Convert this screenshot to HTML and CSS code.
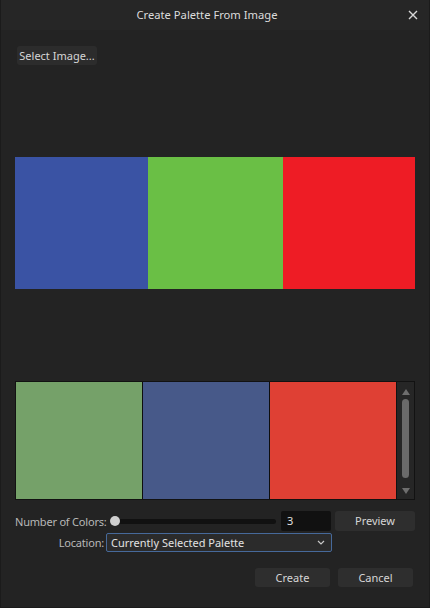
FILE: index.html
```html
<!DOCTYPE html>
<html>
<head>
<meta charset="utf-8">
<link rel="stylesheet" href="styles.css">
</head>
<body>
<div class="window">
  <div class="titlebar">
    <span class="title">Create Palette From Image</span>
    <svg class="close" width="10" height="10" viewBox="0 0 10 10"><path d="M1 1L9 9M9 1L1 9" stroke="#d8d8d8" stroke-width="1.4"/></svg>
  </div>
  <div class="content">
    <div class="select-row"><button class="btn select-btn">Select Image...</button></div>
    <div class="image">
      <div class="img-blue"></div>
      <div class="img-green"></div>
      <div class="img-red"></div>
    </div>
    <div class="palette">
      <div class="swatches">
        <div class="sw sw-green"></div>
        <div class="sw sw-blue"></div>
        <div class="sw sw-red"></div>
      </div>
      <div class="scrollbar">
        <svg class="arrow" width="8" height="6" viewBox="0 0 8 6"><path d="M4 0L8 6H0Z" fill="#6e6e6e"/></svg>
        <div class="thumb"></div>
        <svg class="arrow" width="8" height="6" viewBox="0 0 8 6"><path d="M0 0H8L4 6Z" fill="#6e6e6e"/></svg>
      </div>
    </div>
    <div class="row row1">
      <span class="label">Number of Colors:</span>
      <div class="slider"><div class="track"></div><div class="knob"></div></div>
      <div class="numbox">3</div>
      <button class="btn preview-btn">Preview</button>
    </div>
    <div class="row row2">
      <span class="label">Location:</span>
      <div class="dropdown">
        <span>Currently Selected Palette</span>
        <svg width="8" height="5" viewBox="0 0 8 5"><path d="M1 1L4 4L7 1" stroke="#c8c8c8" stroke-width="1.2" fill="none"/></svg>
      </div>
    </div>
    <div class="actions">
      <button class="btn action-btn">Create</button>
      <button class="btn action-btn">Cancel</button>
    </div>
  </div>
</div>
</body>
</html>
```
FILE: styles.css
```css
html, body {
  margin: 0;
  padding: 0;
  background: #232323;
}
body {
  font-family: "Noto Sans", "Open Sans", sans-serif;
  font-size: 11px;
  color: #d6d6d6;
}
.window {
  width: 430px;
  height: 608px;
  box-sizing: border-box;
  border: 1px solid #1b1b1b;
  border-top: none;
  background: #232323;
  display: flex;
  flex-direction: column;
}
.titlebar {
  height: 30px;
  background: #262626;
  display: flex;
  align-items: center;
  justify-content: center;
  position: relative;
  flex: none;
  padding-right: 16px;
}
.title {
  font-size: 11.2px;
  color: #dcdcdc;
  margin-top: -1px;
  white-space: nowrap;
}
.close {
  position: absolute;
  right: 11px;
  top: 10px;
}
.content {
  padding: 0 14px;
  display: flex;
  flex-direction: column;
}
.btn {
  font-family: inherit;
  font-size: 11px;
  color: #d6d6d6;
  background: #2e2e2e;
  border: none;
  border-radius: 3px;
  padding: 0;
  line-height: 19px;
  height: 19px;
  white-space: nowrap;
}
.select-row {
  margin-top: 16px;
  display: flex;
  padding-left: 2px;
}
.select-btn {
  width: 80px;
  background: #2c2c2c;
}
.image {
  margin-top: 92px;
  height: 132px;
  display: flex;
}
.img-blue { width: 133px; background: #3a53a4; }
.img-green { width: 135px; background: #6abf45; }
.img-red { flex: 1; background: #ee1c25; }
.palette {
  margin-top: 92px;
  height: 119px;
  box-sizing: border-box;
  border: 1px solid #121212;
  display: flex;
}
.swatches {
  flex: 1;
  display: flex;
  gap: 1px;
  background: #0e0e0e;
}
.sw { flex: 1; }
.sw-green { background: #75a169; }
.sw-blue { background: #475989; }
.sw-red { background: #df4034; }
.scrollbar {
  width: 18px;
  background: #262626;
  border-left: 1px solid #121212;
  display: flex;
  flex-direction: column;
  align-items: center;
  padding: 7px 0 5px;
  box-sizing: border-box;
  gap: 4px;
}
.thumb {
  width: 7px;
  flex: 1;
  background: #6a6a6a;
  border-radius: 4px;
  margin: 0 0 6px;
}
.row {
  display: flex;
  align-items: center;
}
.row1 {
  margin-top: 11px;
  height: 20px;
}
.row2 {
  margin-top: 2px;
  height: 19px;
}
.label {
  color: #b8b8b8;
  text-align: right;
  width: 89px;
  margin-right: 2px;
  flex: none;
  white-space: nowrap;
  letter-spacing: -0.2px;
}
.slider {
  position: relative;
  width: 166px;
  height: 12px;
  margin-left: 4px;
  display: flex;
  align-items: center;
  flex: none;
}
.track {
  margin-left: 5px;
  width: 161px;
  height: 5px;
  background: #111;
  border-radius: 3px;
}
.knob {
  position: absolute;
  left: 0;
  top: 1px;
  width: 10px;
  height: 10px;
  border-radius: 50%;
  background: #cfcfcf;
}
.numbox {
  margin-left: 5px;
  width: 50px;
  height: 20px;
  background: #111;
  border-radius: 2px;
  box-sizing: border-box;
  padding-left: 6px;
  line-height: 20px;
  color: #e0e0e0;
  flex: none;
}
.preview-btn {
  margin-left: 4px;
  width: 80px;
  height: 20px;
  line-height: 20px;
  flex: none;
}
.dropdown {
  width: 226px;
  height: 19px;
  box-sizing: border-box;
  border: 1px solid #46699a;
  border-radius: 2px;
  background: #2b2b2b;
  display: flex;
  align-items: center;
  justify-content: space-between;
  padding: 0 6px 0 4px;
  color: #e2e2e2;
  white-space: nowrap;
}
.actions {
  margin-top: 16px;
  display: flex;
  justify-content: flex-end;
  gap: 8px;
  padding-right: 2px;
}
.action-btn {
  width: 75px;
}
```
